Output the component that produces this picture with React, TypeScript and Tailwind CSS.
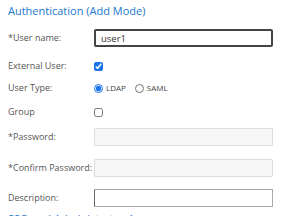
import React from "react";

function Row({ label, top, children }: { label: string; top: string; children: React.ReactNode }) {
  return (
    <div className={`flex items-center h-[18px] ${top}`}>
      <div className="w-[86px] shrink-0 text-[9px] text-[#555] whitespace-nowrap">{label}</div>
      <div className="flex items-center">{children}</div>
    </div>
  );
}

export default function App(): JSX.Element {
  return (
    <div className="w-[290px] h-[216px] overflow-hidden bg-white pl-[8px] font-['Open_Sans',sans-serif]">
      <div className="pt-[3px] h-[19px] text-[11px] leading-[16px] text-[#2277cc]">Authentication (Add Mode)</div>
      <Row label="*User name:" top="mt-[10px]">
        <input
          defaultValue="user1"
          className="w-[179px] h-[18px] border-2 border-[#444] rounded-[2px] px-[5px] text-[9.5px] text-[#333] outline-none"
        />
      </Row>
      <Row label="External User:" top="mt-[10px]">
        <input type="checkbox" defaultChecked className="w-[9px] h-[9px] m-0 accent-[#1a73e8]" />
      </Row>
      <Row label="User Type:" top="mt-[4px]">
        <label className="flex items-center gap-[3px] text-[8px] text-[#444]">
          <input type="radio" name="utype" defaultChecked className="w-[9px] h-[9px] m-0 accent-[#1a73e8]" />
          LDAP
        </label>
        <label className="flex items-center gap-[3px] ml-[9px] text-[8px] text-[#444]">
          <input type="radio" name="utype" className="w-[9px] h-[9px] m-0" />
          SAML
        </label>
      </Row>
      <Row label="Group" top="mt-[6px]">
        <input type="checkbox" className="w-[9px] h-[9px] m-0" />
      </Row>
      <Row label="*Password:" top="mt-[7px]">
        <input
          type="password"
          disabled
          className="w-[179px] h-[18px] border border-[#ddd] rounded-[1px] bg-[#f6f6f6]"
        />
      </Row>
      <Row label="*Confirm Password:" top="mt-[13px]">
        <input
          type="password"
          disabled
          className="w-[179px] h-[18px] border border-[#ddd] rounded-[1px] bg-[#f6f6f6]"
        />
      </Row>
      <Row label="Description:" top="mt-[12px]">
        <input className="w-[179px] h-[18px] border border-[#aaa] border-l-[#666] rounded-[1px] bg-white" />
      </Row>
      <div className="mt-[4px] text-[11px] leading-[16px] text-[#2277cc] whitespace-nowrap">SSO and Administrator Access</div>
    </div>
  );
}
